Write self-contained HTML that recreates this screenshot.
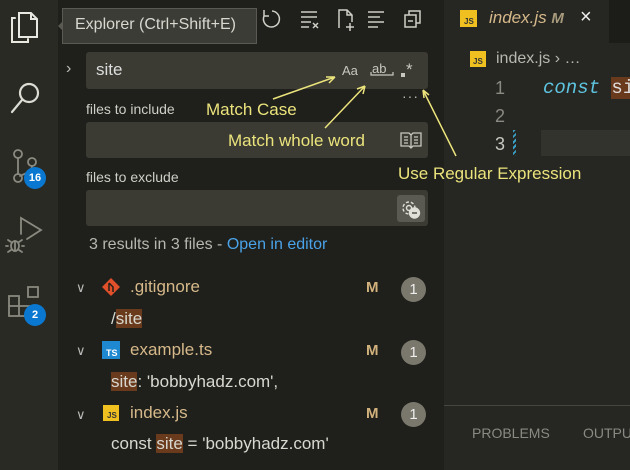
<!DOCTYPE html>
<html><head><meta charset="utf-8"><style>
*{margin:0;padding:0;box-sizing:border-box}
body{width:630px;height:470px;overflow:hidden;background:#20201c;font-family:"Liberation Sans","DejaVu Sans",sans-serif;position:relative}
.a{position:absolute}
.t{position:absolute;white-space:nowrap}
.inp{position:absolute;left:86px;width:342px;background:#3b3b34;border-radius:3px}
.y{color:#ebe37c;font-size:17px}
.badge{position:absolute;width:22px;height:22px;border-radius:50%;background:#0a78d1;color:#fff;font-size:11px;font-weight:bold;text-align:center;line-height:22px}
.cnt{position:absolute;left:401px;width:25px;height:25px;border-radius:50%;background:#7a786c;color:#eee;font-size:15px;text-align:center;line-height:25px}
.M{position:absolute;left:366px;color:#d2b27c;font-weight:bold;font-size:15px}
.hl{background:#6a3a1c}
</style></head><body>
<div class="a" style="left:0;top:0;width:58px;height:470px;background:#2a2a25"></div>
<div class="a" style="left:58px;top:0;width:386px;height:470px;background:#1f1f1b"></div>
<div class="a" style="left:444px;top:0;width:186px;height:470px;background:#262622"></div>
<div class="a" style="left:609px;top:0;width:21px;height:43px;background:#1c1c19"></div>
<div class="a" style="left:444px;top:405px;width:186px;height:1px;background:#46463f"></div>
<svg class="a" style="left:0;top:0" width="58" height="340" fill="none" stroke-linecap="round">
<g stroke="#e8e8e0" stroke-width="2"><path d="M19 13h12l6 6v18H19z M31 13v6h6"/><path d="M15 18h-3v24h16v-3"/></g>
<g stroke="#dcdcd4" stroke-width="2.2"><circle cx="29" cy="93" r="9"/><path d="M22 100l-10 12"/></g>
<g stroke="#8a8a80" stroke-width="1.8"><circle cx="18" cy="154" r="4"/><circle cx="32" cy="162" r="4"/><circle cx="18" cy="178" r="4"/><path d="M18 158v16M32 166c0 6-8 8-12 10"/>
<path d="M21 234v-16l20 12-14 9"/><ellipse cx="15" cy="246" rx="4" ry="5"/><path d="M11 242l-3-2M11 250l-3 2M19 242l3-2M19 250l3 2M8 246h-2M22 246h2M15 241v10"/>
<path d="M9 296h10v10H9zM9 306h10v10H9zM19 306h10v10H19zM28 287h10v10H28z"/></g>
</svg>
<div class="badge" style="left:24px;top:167px">16</div>
<div class="badge" style="left:24px;top:304px">2</div>
<div class="a" style="left:62px;top:8px;width:195px;height:36px;background:#3c3c36;border:1px solid #5a5a52"></div>
<div class="a" style="left:58px;top:21px;width:0;height:0;border-top:5px solid transparent;border-bottom:5px solid transparent;border-right:5px solid #5a5a52"></div>
<div class="t" style="left:75px;top:16px;color:#d8d8d0;font-size:16px">Explorer (Ctrl+Shift+E)</div>
<svg class="a" style="left:255px;top:0" width="170" height="40" fill="none" stroke="#cfcfc7" stroke-width="1.5">
<path d="M17 11a8 8 0 1 1-8 5M9 10v6h5"/>
<path d="M46 12h16M46 17h16M46 22h10M46 27h8M58 23l5 5M63 23l-5 5"/>
<path d="M84 28V10h8l5 5v7M92 10v5h5M91 27h8M95 23v8"/>
<path d="M113 12h16M113 17h12M113 22h16M113 27h10"/>
<path d="M150 15h11v12h-11zM154 15v-4h11v12h-4M153 21h5"/>
</svg>
<div class="t" style="left:66px;top:60px;color:#bbb;font-size:16px">›</div>
<div class="inp" style="top:52px;height:37px"></div>
<div class="t" style="left:96px;top:60px;color:#ddd;font-size:17px">site</div>
<div class="t" style="left:342px;top:63px;color:#c8c8c0;font-size:13px">Aa</div>
<div class="t" style="left:372px;top:61px;color:#c8c8c0;font-size:13px">ab</div>
<svg class="a" style="left:368px;top:58px" width="60" height="30" fill="none" stroke="#c8c8c0" stroke-width="1.2"><path d="M3 14v3h22v-3"/><rect x="33" y="15" width="4" height="4" fill="#c8c8c0" stroke="none"/><text x="38" y="17" fill="#c8c8c0" stroke="none" font-size="17" font-family="Liberation Sans">*</text></svg>
<div class="t" style="left:402px;top:88px;color:#bbb;font-size:14px;letter-spacing:1px">···</div>
<div class="t" style="left:86px;top:101px;color:#cfcfc7;font-size:14px">files to include</div>
<div class="inp" style="top:122px;height:36px"></div>
<svg class="a" style="left:400px;top:131px" width="22" height="18" fill="none" stroke="#c8c8c0" stroke-width="1.3"><path d="M1 2h8l2 2 2-2h8v13h-8l-2 2-2-2H1zM11 4v13M4 6h4M4 9h4M4 12h4M14 6h4M14 9h4M14 12h4"/></svg>
<div class="t" style="left:86px;top:169px;color:#cfcfc7;font-size:14px">files to exclude</div>
<div class="inp" style="top:190px;height:36px"></div>
<div class="a" style="left:397px;top:195px;width:28px;height:27px;background:#5a5a52;border-radius:3px"></div>
<svg class="a" style="left:400px;top:198px" width="22" height="22" fill="none" stroke="#e0e0d8" stroke-width="1.4"><circle cx="9" cy="10" r="6" stroke-dasharray="3 2"/><circle cx="9" cy="10" r="2.5"/><circle cx="14.5" cy="15" r="5" fill="#e0e0d8"/><path d="M12 15h5" stroke="#5a5a52" stroke-width="1.6"/></svg>
<svg class="a" style="left:0;top:0" width="630" height="200" fill="none" stroke="#ebe37c" stroke-width="1.5">
<path d="M273 99l62-22M335 77l-9 0M335 77l-6 6"/>
<path d="M325 128l40-42M365 86l-8 3M365 86l-2 8"/>
<path d="M456 156l-33-66M423 90l1 8M423 90l6 5"/>
</svg>
<div class="t y" style="left:206px;top:100px">Match Case</div>
<div class="t y" style="left:228px;top:131px">Match whole word</div>
<div class="t y" style="left:398px;top:164px">Use Regular Expression</div>
<div class="t" style="left:89px;top:236px;color:#b8b8b0;font-size:16px">3 results in 3 files - <span style="color:#4aa3e8">Open in editor</span></div>
<div class="t" style="left:76px;top:280px;color:#bbb;font-size:13px">∨</div>
<svg class="a" style="left:101px;top:277px" width="20" height="20"><path d="M10 1l9 9-9 9-9-9z" fill="#e0502a"/><path d="M8 6l4 4v5M8 6v8" stroke="#1f1f1b" stroke-width="1.5" fill="none"/></svg>
<div class="t" style="left:130px;top:277px;color:#d6b98a;font-size:17px">.gitignore</div>
<div class="M" style="top:279px">M</div><div class="cnt" style="top:277px">1</div>
<div class="t" style="left:111px;top:309px;color:#d8d8d0;font-size:17px">/<span class="hl">site</span></div>
<div class="t" style="left:76px;top:343px;color:#bbb;font-size:13px">∨</div>
<div class="a" style="left:102px;top:341px;width:18px;height:18px;background:#1e88d0;color:#fff;font-size:9px;font-weight:bold;padding:7px 0 0 4px">TS</div>
<div class="t" style="left:130px;top:340px;color:#d6b98a;font-size:17px">example.ts</div>
<div class="M" style="top:342px">M</div><div class="cnt" style="top:340px">1</div>
<div class="t" style="left:111px;top:372px;color:#d8d8d0;font-size:17px"><span class="hl">site</span>: 'bobbyhadz.com',</div>
<div class="t" style="left:76px;top:407px;color:#bbb;font-size:13px">∨</div>
<div class="a" style="left:103px;top:405px;width:16px;height:16px;background:#f0c020;color:#333;font-size:8px;font-weight:bold;padding:6px 0 0 4px">JS</div>
<div class="t" style="left:130px;top:403px;color:#d6b98a;font-size:17px">index.js</div>
<div class="M" style="top:405px">M</div><div class="cnt" style="top:402px">1</div>
<div class="t" style="left:111px;top:434px;color:#d8d8d0;font-size:17px">const <span class="hl">site</span> = 'bobbyhadz.com'</div>
<div class="a" style="left:460px;top:10px;width:17px;height:17px;background:#f0c020;color:#333;font-size:8px;font-weight:bold;padding:7px 0 0 4px">JS</div>
<div class="t" style="left:489px;top:8px;color:#d6b98a;font-size:17px;font-style:italic">index.js <b style="color:#a89a7c;font-size:15px">M</b></div>
<div class="t" style="left:580px;top:6px;color:#eee;font-size:20px">×</div>
<div class="a" style="left:470px;top:51px;width:16px;height:16px;background:#f0c020;color:#333;font-size:8px;font-weight:bold;padding:6px 0 0 3px">JS</div>
<div class="t" style="left:496px;top:50px;color:#b8b8b0;font-size:16px">index.js › …</div>
<div class="t" style="left:495px;top:78px;color:#8a8a82;font-size:18px">1</div>
<div class="t" style="left:495px;top:106px;color:#8a8a82;font-size:18px">2</div>
<div class="t" style="left:495px;top:134px;color:#c8c8c0;font-size:18px">3</div>
<div class="a" style="left:513px;top:130px;width:3px;height:26px;background:repeating-linear-gradient(135deg,#3aa0c8 0 2px,transparent 2px 4px)"></div>
<div class="a" style="left:541px;top:130px;width:89px;height:26px;background:#33332d"></div>
<div class="t" style="left:543px;top:77px;color:#5ec4e0;font-size:19px;font-style:italic;font-family:'Liberation Mono',monospace">const <span style="font-style:normal;color:#ddd;background:#6a3a1c">si</span></div>
<div class="t" style="left:472px;top:425px;color:#8a8a82;font-size:14px">PROBLEMS</div>
<div class="t" style="left:583px;top:425px;color:#8a8a82;font-size:14px">OUTPUT</div>
</body></html>
